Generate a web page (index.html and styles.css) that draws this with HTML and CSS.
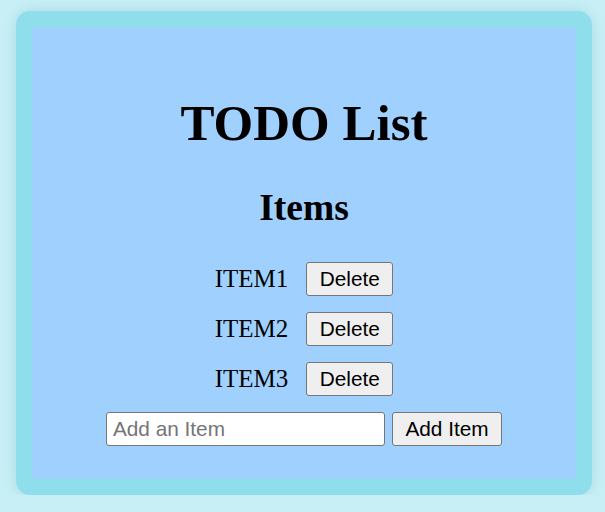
FILE: index.html
```html
<!DOCTYPE html>
<html lang="en">
<head>
    <meta charset="UTF-8">
    <meta name="viewport" content="width=device-width, initial-scale=1.0">
    <title>TODO List</title>
    <link rel="stylesheet" href="styles.css">
</head>
<body>
    <div class="card">
        <div class="todo">
            <h1>TODO List</h1>
            <h2>Items</h2>
            <div class="items" id="items">
                <div class="item"><span>ITEM1</span><button class="btn">Delete</button></div>
                <div class="item"><span>ITEM2</span><button class="btn">Delete</button></div>
                <div class="item"><span>ITEM3</span><button class="btn">Delete</button></div>
            </div>
            <div class="add-row">
                <input type="text" id="new-item" placeholder="Add an Item">
                <button class="btn" id="add">Add Item</button>
            </div>
        </div>
    </div>

    <script>
        const items = document.getElementById('items');
        const input = document.getElementById('new-item');

        function bindDelete(row) {
            row.querySelector('button').addEventListener('click', () => row.remove());
        }

        document.querySelectorAll('.item').forEach(bindDelete);

        document.getElementById('add').addEventListener('click', () => {
            const text = input.value.trim();
            if (!text) return;
            const row = document.createElement('div');
            row.className = 'item';
            row.innerHTML = '<span></span><button class="btn">Delete</button>';
            row.querySelector('span').textContent = text.toUpperCase();
            items.appendChild(row);
            bindDelete(row);
            input.value = '';
        });
    </script>
</body>
</html>
```

FILE: styles.css
```css
body {
    margin: 0;
    padding: 11px 0 0 16px;
    background-color: #c8eff6;
    font-family: "Liberation Serif", "Times New Roman", serif;
}

/* Marco exterior */
.card {
    box-sizing: border-box;
    width: 576px;
    border: 16px solid #8fdeeb;
    border-radius: 14px;
    box-shadow: 0 0 14px rgba(40, 120, 140, 0.18);
}

.todo {
    background-color: #a0d0fe;
    padding: 35px 0 25.5px;
    text-align: center;
}

h1 {
    font-size: 51px;
    line-height: 56px;
    margin: 33px 0 36px;
}

h2 {
    font-size: 37.5px;
    line-height: 42px;
    margin: 0 0 24.5px;
}

/* Lista */
.item,
.add-row {
    height: 50px;
    display: flex;
    justify-content: center;
    align-items: center;
}

.item span {
    font-size: 25px;
    margin-right: 18px;
}

.btn {
    height: 34px;
    padding: 0 12.5px;
    font-family: "Liberation Sans", Arial, sans-serif;
    font-size: 20.8px;
    color: black;
    background-color: #efefef;
    border: 1px solid #767676;
    border-radius: 3px;
}

.add-row input {
    box-sizing: border-box;
    width: 279px;
    height: 34px;
    padding: 0 6px;
    margin-right: 7px;
    font-family: "Liberation Sans", Arial, sans-serif;
    font-size: 20.8px;
    background: white;
    border: 1px solid #767676;
    border-radius: 3px;
}

.add-row input::placeholder {
    color: #757575;
}
```
